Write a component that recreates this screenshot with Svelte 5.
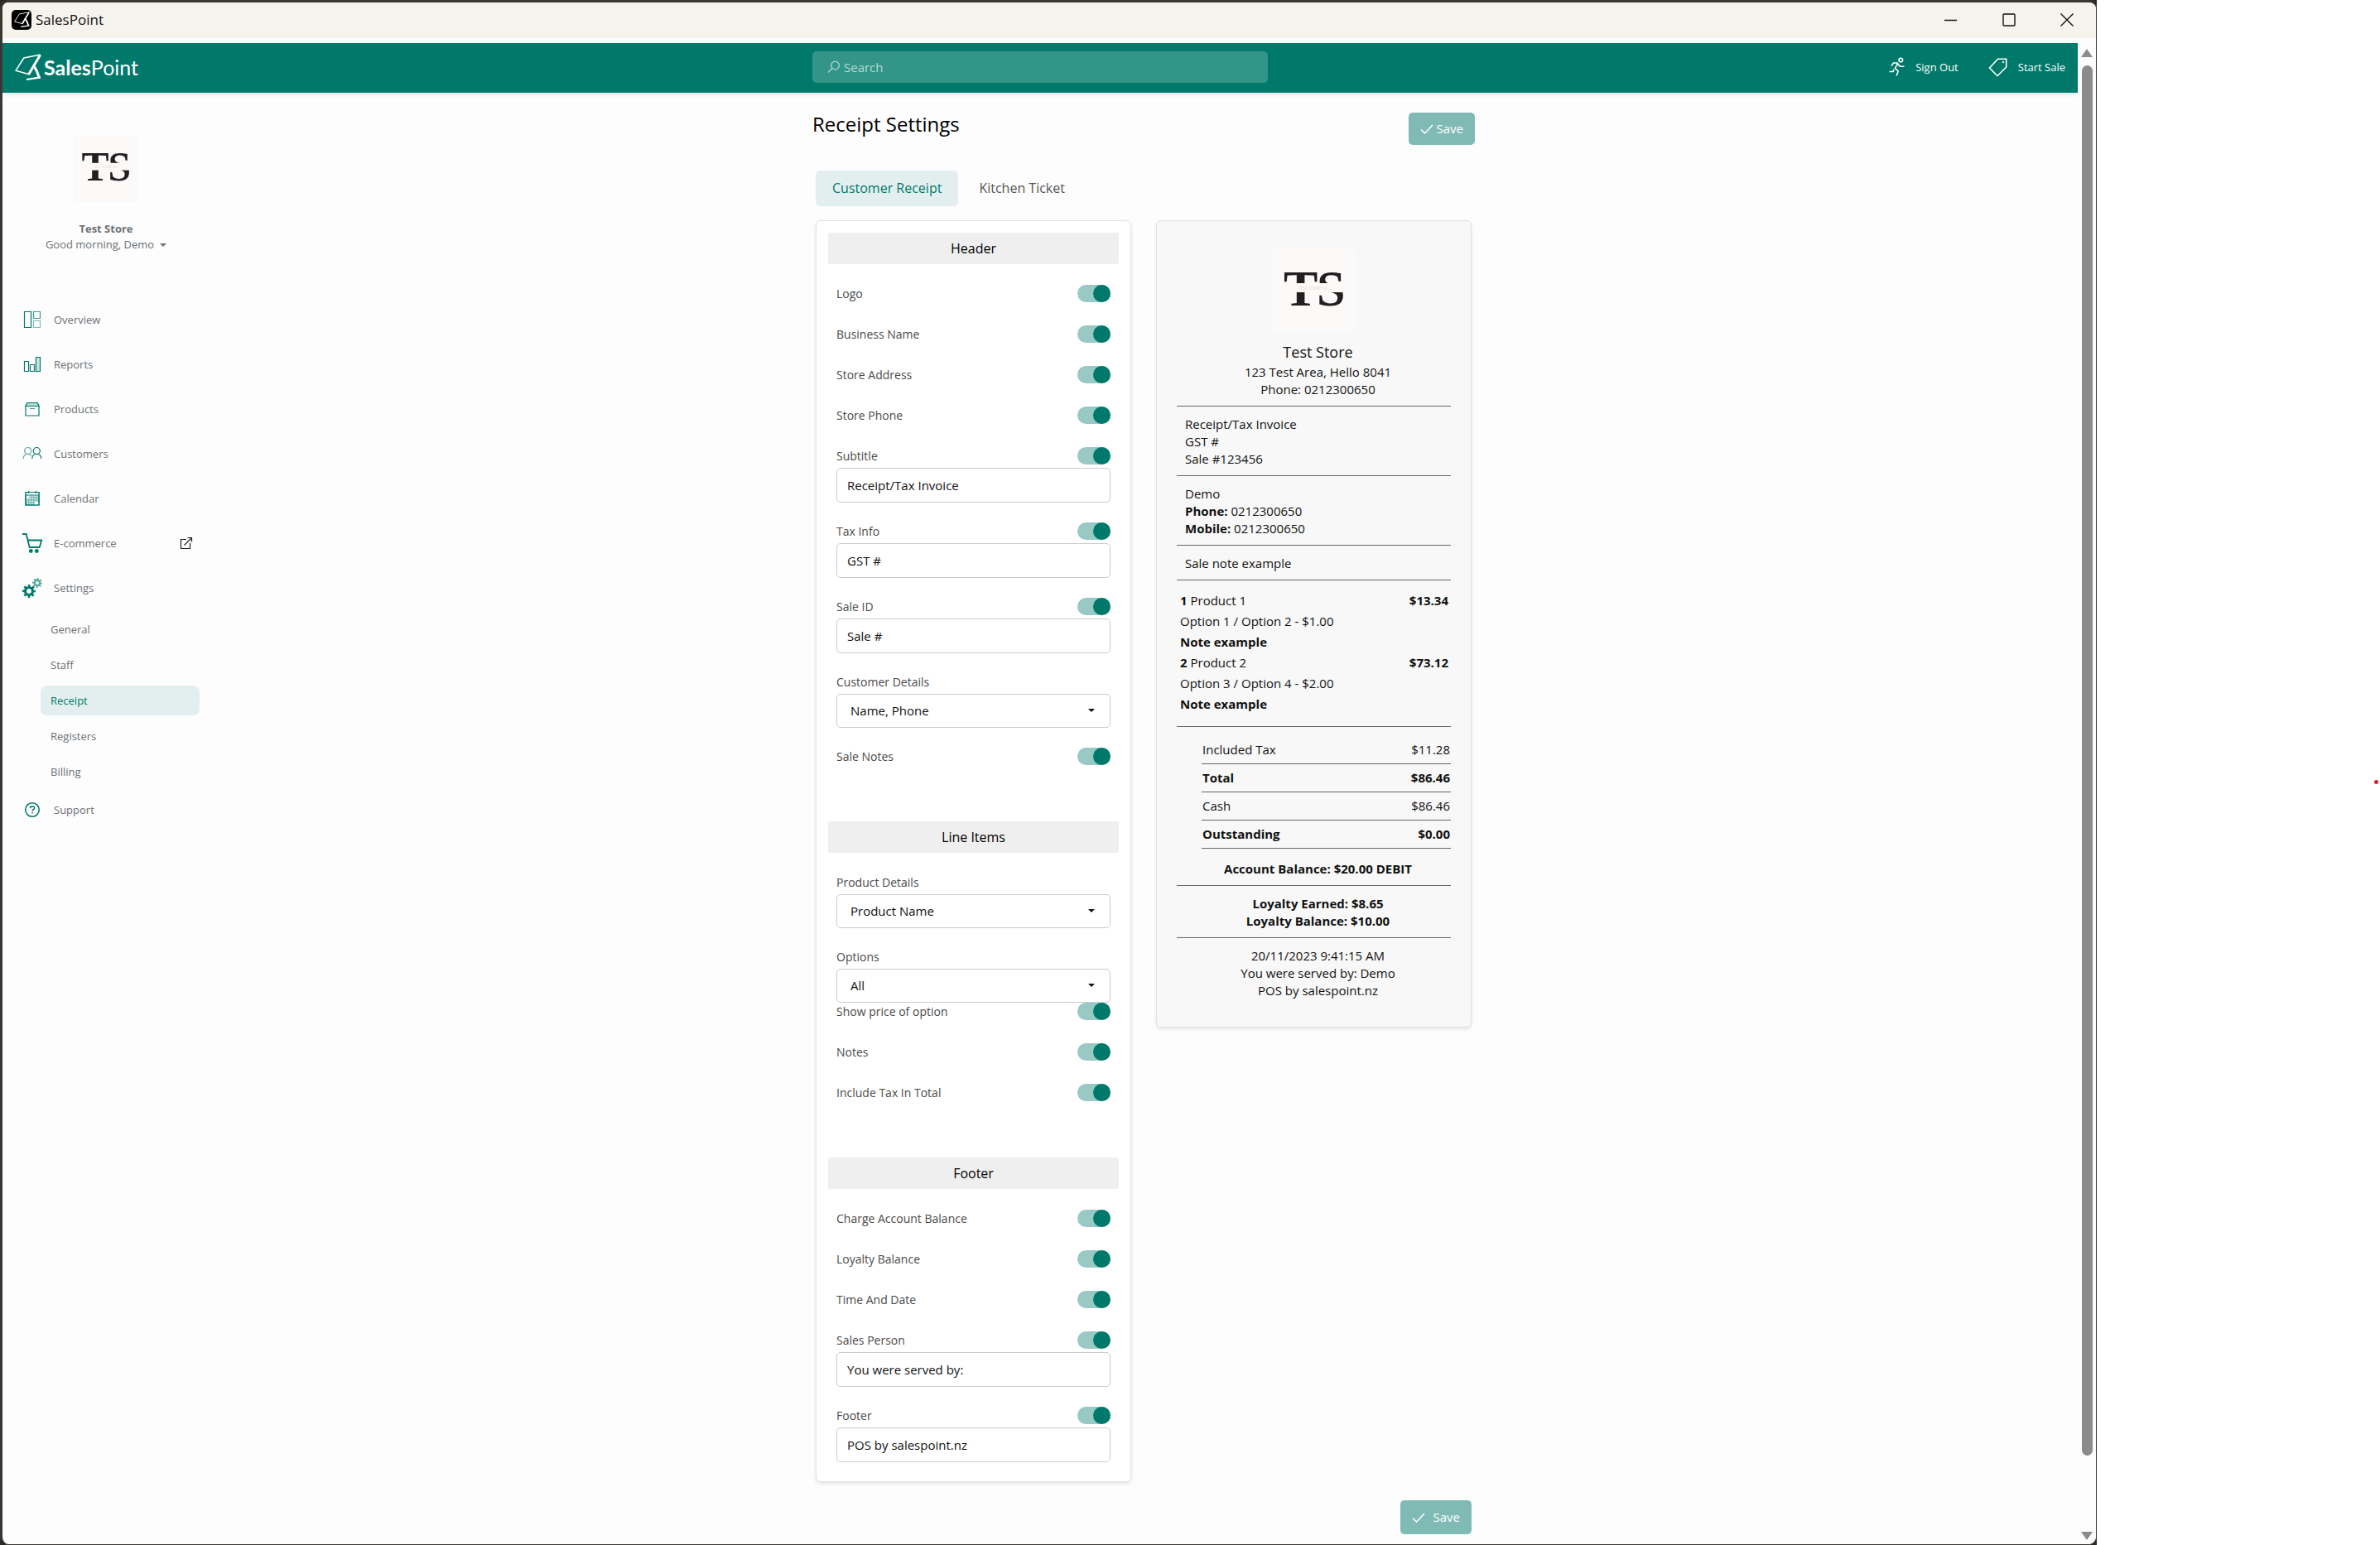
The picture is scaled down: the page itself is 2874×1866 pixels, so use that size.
<script>
  const icons = {
    overview: '<path d="M2.5 2.5h8v19h-8z"/><path opacity=".75" d="M13.5 2.5h8v8h-8z"/><path opacity=".5" d="M13.5 13.5h8v8h-8z"/>',
    reports: '<path d="M2.5 8.5h5v12h-5zM9.5 12.5h5v8h-5z"/><path fill="#cfe4e1" d="M16.5 3.5h5v17h-5z"/>',
    products: '<path d="M4 8.5v11.5h16V8.5"/><path fill="#b9d9d6" d="M3.8 8.5l2-4h12.4l2 4z"/><path opacity=".7" d="M9 11.5h6"/>',
    customers: '<g opacity=".65"><circle cx="6.7" cy="8.5" r="4"/><path d="M1.2 18c0-3.5 2-5.5 5.5-5.5 2 0 3.5.8 4.3 2"/></g><circle cx="17.3" cy="8.5" r="4"/><path d="M11.8 18c0-3.5 2-5.5 5.5-5.5s5.500 2 5.500 5.500"/>',
    calendar: '<path fill="#b9d9d6" d="M4 4.5h16v15.5H4z"/><path fill="#fff" d="M4 4.5h16v4H4zM4.5 9h3.5v2.5H4.5zM15 16h4.5v3.5H15z" stroke="none"/><path d="M4 4.5h16v15.5H4zM4 8h16M7.5 3v3M16.5 3v3"/><path stroke-dasharray="1.3 1.7" d="M10 11h8M7 14h11M7 17h8"/>',
    cart: '<path stroke-width="1.8" d="M0 1h4.7l4 16h12l2.6-8.5H6.5"/><circle cx="10.3" cy="21.5" r="2.4" fill="#00796b" stroke="none"/><circle cx="17.3" cy="21.5" r="2.4" fill="#00796b" stroke="none"/>',
    gears: '<circle cx="8" cy="16" r="4.5" stroke-width="3.2"/><circle cx="8" cy="16" r="6.7" stroke-width="2.6" stroke-dasharray="2.63 2.63" stroke-dashoffset="1.3"/><g opacity=".65"><circle cx="18" cy="6" r="3.2" stroke-width="2.4"/><circle cx="18" cy="6" r="5" stroke-width="2" stroke-dasharray="1.96 1.96" stroke-dashoffset="1"/></g>',
    help: '<circle cx="12" cy="12" r="8.3" stroke-width="1.5"/><path stroke-width="1.5" d="M9.5 10.2c0-1.6 1-2.5 2.5-2.5s2.5.9 2.5 2.2c0 1.7-2.4 1.8-2.4 3.8M12.1 15v1.6"/>'
  }

  const nav = [
    { name: 'Overview', icon: 'overview' },
    { name: 'Reports', icon: 'reports' },
    { name: 'Products', icon: 'products' },
    { name: 'Customers', icon: 'customers' },
    { name: 'Calendar', icon: 'calendar' },
    { name: 'E-commerce', icon: 'cart', external: true },
    { name: 'Settings', icon: 'gears', children: ['General', 'Staff', 'Receipt', 'Registers', 'Billing'] },
    { name: 'Support', icon: 'help' }
  ]

  let settings = $state([
    {
      title: 'Header',
      rows: [
        { label: 'Logo', on: true },
        { label: 'Business Name', on: true },
        { label: 'Store Address', on: true },
        { label: 'Store Phone', on: true },
        { label: 'Subtitle', on: true, text: 'Receipt/Tax Invoice' },
        { label: 'Tax Info', on: true, text: 'GST #' },
        { label: 'Sale ID', on: true, text: 'Sale #' },
        { label: 'Customer Details', options: ['Name, Phone', 'Name'] },
        { label: 'Sale Notes', on: true }
      ]
    },
    {
      title: 'Line Items',
      rows: [
        { label: 'Product Details', options: ['Product Name', 'SKU'] },
        { label: 'Options', options: ['All', 'None'], tight: true },
        { label: 'Show price of option', on: true },
        { label: 'Notes', on: true },
        { label: 'Include Tax In Total', on: true }
      ]
    },
    {
      title: 'Footer',
      rows: [
        { label: 'Charge Account Balance', on: true },
        { label: 'Loyalty Balance', on: true },
        { label: 'Time And Date', on: true },
        { label: 'Sales Person', on: true, text: 'You were served by:' },
        { label: 'Footer', on: true, text: 'POS by salespoint.nz' }
      ]
    }
  ])

  const items = [
    { qty: 1, name: 'Product 1', price: '$13.34', options: 'Option 1 / Option 2 - $1.00' },
    { qty: 2, name: 'Product 2', price: '$73.12', options: 'Option 3 / Option 4 - $2.00' }
  ]

  const totals = [
    { name: 'Included Tax', value: '$11.28' },
    { name: 'Total', value: '$86.46', strong: true },
    { name: 'Cash', value: '$86.46' },
    { name: 'Outstanding', value: '$0.00', strong: true }
  ]
</script>

{#snippet mark(size)}
  <svg width={size} height={size} viewBox="0 0 32 32" fill="none" stroke="#fff" aria-hidden="true">
    <path stroke-width="1.5" d="M18 25L1 20.3 10.8 5 31 1" />
    <path stroke-width="3" d="M30.5 1.5L16.8 24.5" />
    <path stroke-width="3" d="M22.5 14L26.5 21 29.5 29.5" />
    <path stroke-width="2.2" d="M14 31L31 28.3" />
  </svg>
{/snippet}

{#snippet storeLogo(size)}
  <svg class="store-logo" width={size} height={size} viewBox="0 0 100 100" role="img" aria-label="Test Store logo">
    <rect width="100" height="100" fill="#fbfaf8" />
    <g font-family="Liberation Serif, serif" font-weight="700" font-size="62" fill="#231f20">
      <text x="13" y="68">T</text>
      <text x="53" y="68">S</text>
    </g>
    <rect x="10" y="41" width="80" height="11" fill="#fbfaf8" />
    <text x="49" y="49" text-anchor="middle" font-family="Open Sans, sans-serif" font-size="5" fill="#ecd9da">TEST STORE NZ</text>
  </svg>
{/snippet}

{#snippet check()}
  <svg width="16" height="16" viewBox="0 0 16 16" fill="none" stroke="#fff" stroke-width="1.5" aria-hidden="true">
    <path d="M1 8.5L5.5 13 15 3" />
  </svg>
{/snippet}

<div class="desktop">
  <div class="window">
    <div class="titlebar">
      <span class="app-icon">{@render mark(19)}</span>
      <span class="app-name">SalesPoint</span>
      <div class="controls">
        <button aria-label="Minimize"><svg width="16" height="16"><path d="M0 8.5h15" /></svg></button>
        <button aria-label="Maximize"><svg width="16" height="16"><rect x="1" y="1" width="14" height="14" rx="1" /></svg></button>
        <button aria-label="Close"><svg width="16" height="16"><path d="M.5.5l15 15M15.5.5l-15 15" /></svg></button>
      </div>
    </div>

    <div class="view">
      <div class="page">
        <header>
          <a class="brand" href="#home">{@render mark(32)}<span><b>Sales</b>Point</span></a>
          <label class="search">
            <svg width="16" height="16" viewBox="0 0 16 16" fill="none" stroke="#b5d9d5" stroke-width="1.3" aria-hidden="true">
              <circle cx="9.5" cy="6" r="4.8" /><path d="M6 9.5L1 14.5" />
            </svg>
            <input type="search" placeholder="Search" aria-label="Search" />
          </label>
          <div class="actions">
            <a href="#signout">
              <svg width="20" height="24" viewBox="0 0 20 24" fill="none" stroke="#fff" stroke-width="1.6" aria-hidden="true">
                <circle cx="14.3" cy="3.5" r="2.3" />
                <path d="M3 10.5L5.5 7H10l3.300 4.300H18.500M10.500 7.500L7.500 13.500l3.700 3.500-2 5.500M6.200 14.800L5 17.500H.5" />
              </svg>
              Sign Out
            </a>
            <a href="#sale">
              <svg width="24" height="24" viewBox="0 0 24 24" fill="none" stroke="#fff" stroke-width="1.6" aria-hidden="true">
                <path d="M1.5 13L11.5 2.3h10.2V12L11 22.7z" /><circle cx="18" cy="6" r=".4" />
              </svg>
              Start Sale
            </a>
          </div>
        </header>

        <div class="body">
          <aside>
            <div class="store">
              {@render storeLogo(80)}
              <strong>Test Store</strong>
              <button class="greeting">Good morning, Demo <i class="caret"></i></button>
            </div>
            <nav>
              {#each nav as item}
                <a class="nav-item" href="#{item.icon}">
                  <svg width="24" height="24" viewBox="0 0 24 24" fill="none" stroke="#00796b" stroke-width="1.2" aria-hidden="true">{@html icons[item.icon]}</svg>
                  {item.name}
                  {#if item.external}
                    <svg class="external" width="16" height="16" viewBox="0 0 16 16" fill="none" stroke="#222" stroke-width="1.2" aria-hidden="true">
                      <path d="M8 3.5H1.5v11h11V8M5.5 10.5l9-9M9.500 1.500h5v5" />
                    </svg>
                  {/if}
                </a>
                {#if item.children}
                  <div class="sub">
                    {#each item.children as child}
                      <a href="#{child}" class:active={child === 'Receipt'}>{child}</a>
                    {/each}
                  </div>
                {/if}
              {/each}
            </nav>
          </aside>

          <main>
            <div class="heading">
              <h1>Receipt Settings</h1>
              <button class="save">{@render check()}Save</button>
            </div>

            <div class="content">
              <div class="tabs">
                <button class="active">Customer Receipt</button>
                <button>Kitchen Ticket</button>
              </div>

              <div class="columns">
                <form class="card">
                  {#each settings as section, s}
                    <section>
                      <h2>{section.title}</h2>
                      {#each section.rows as row, r}
                        <div class="row" class:with-field={row.text || row.options} class:tight={row.tight}>
                          <div class="line">
                            <label for="field-{s}-{r}">{row.label}</label>
                            {#if !row.options}
                              <input id="field-{s}-{r}" class="toggle" type="checkbox" bind:checked={row.on} />
                            {/if}
                          </div>
                          {#if row.text}
                            <input class="text" type="text" aria-label="{row.label} text" bind:value={row.text} />
                          {:else if row.options}
                            <div class="select">
                              <select id="field-{s}-{r}">
                                {#each row.options as option}
                                  <option>{option}</option>
                                {/each}
                              </select>
                            </div>
                          {/if}
                        </div>
                      {/each}
                    </section>
                  {/each}
                </form>

                <div class="card receipt">
                  {@render storeLogo(100)}
                  <div class="block center first">
                    <p class="store-name">Test Store</p>
                    <p>123 Test Area, Hello 8041</p>
                    <p>Phone: 0212300650</p>
                  </div>
                  <div class="block">
                    <p>Receipt/Tax Invoice</p>
                    <p>GST #</p>
                    <p>Sale #123456</p>
                  </div>
                  <div class="block">
                    <p>Demo</p>
                    <p><b>Phone:</b> 0212300650</p>
                    <p><b>Mobile:</b> 0212300650</p>
                  </div>
                  <div class="block">
                    <p>Sale note example</p>
                  </div>
                  <div class="items">
                    {#each items as item}
                      <p><span><b>{item.qty}</b> {item.name}</span><b>{item.price}</b></p>
                      <p>{item.options}</p>
                      <p><b>Note example</b></p>
                    {/each}
                  </div>
                  <table>
                    <tbody>
                      {#each totals as total}
                        <tr class:strong={total.strong}>
                          <td>{total.name}</td>
                          <td>{total.value}</td>
                        </tr>
                      {/each}
                    </tbody>
                  </table>
                  <div class="block center strong first balance">
                    <p>Account Balance: $20.00 DEBIT</p>
                  </div>
                  <div class="block center strong">
                    <p>Loyalty Earned: $8.65</p>
                    <p>Loyalty Balance: $10.00</p>
                  </div>
                  <div class="block center">
                    <p>20/11/2023 9:41:15 AM</p>
                    <p>You were served by: Demo</p>
                    <p>POS by salespoint.nz</p>
                  </div>
                </div>
              </div>

              <div class="bottom">
                <button class="save wide">{@render check()}Save</button>
              </div>
            </div>
          </main>
        </div>
      </div>

      <div class="scrollbar">
        <svg width="14" height="10"><path d="M7 0l7 10H0z" /></svg>
        <div class="thumb"></div>
        <svg width="14" height="10"><path d="M0 0h14L7 10z" /></svg>
      </div>
    </div>
  </div>
  <span class="dot"></span>
</div>

<style>
  :global(body) {
    background: #fff;
  }

  .desktop {
    --green: #00796b;
    position: relative;
    padding-right: 342px;
    font-family: "Open Sans", "Noto Sans", sans-serif;
    font-size: 15px;
    line-height: 21px;
    color: #111;
    background: linear-gradient(to left, #fff 342px, #2d2a26 342px);
  }

  .desktop * {
    box-sizing: border-box;
  }

  button, input, select {
    font: inherit;
    color: inherit;
    border: 0;
    background: none;
    padding: 0;
    margin: 0;
  }

  a {
    color: inherit;
    text-decoration: none;
  }

  p, h1, h2 {
    margin: 0;
  }

  .window {
    display: flex;
    flex-direction: column;
    min-height: 100vh;
    border: 1px solid #3a3733;
    border-width: 3px 1px 1px 3px;
    border-radius: 10px;
    overflow: hidden;
    background: #fdfdfd;
  }

  .titlebar {
    display: flex;
    align-items: center;
    gap: 5px;
    height: 43px;
    padding: 0 27px 2px 11px;
    background: #f5f3ec;
  }

  .app-icon {
    display: grid;
    place-content: center;
    width: 24px;
    height: 24px;
    border-radius: 5px;
    background: #000;
  }

  .app-name {
    font-size: 17px;
  }

  .controls {
    display: flex;
    gap: 54px;
    margin-left: auto;
  }

  .controls button {
    display: flex;
  }

  .controls svg {
    fill: none;
    stroke: #111;
    stroke-width: 1.4;
  }

  .view {
    display: flex;
    flex: 1;
    padding-top: 6px;
  }

  .page {
    flex: 1;
  }

  header {
    display: grid;
    grid-template-columns: 250px 1fr 800px 1fr;
    align-items: center;
    height: 60px;
    padding-bottom: 2px;
    color: #fff;
    background: var(--green);
    box-shadow: 0 2px 5px #00796b26;
  }

  .brand {
    display: flex;
    align-items: center;
    gap: 3px;
    padding-left: 15px;
    font-family: Lato, sans-serif;
    font-size: 25px;
  }

  .search {
    display: flex;
    grid-column: 3;
    align-items: center;
    gap: 4px;
    width: 550px;
    height: 38px;
    padding-left: 18px;
    border-radius: 5px;
    background: #339488;
  }

  .search input {
    flex: 1;
    outline: 0;
  }

  .search input::placeholder {
    color: #b5d9d5;
  }

  .actions {
    display: flex;
    justify-content: flex-end;
    gap: 36px;
    padding-right: 15px;
    font-size: 13px;
  }

  .actions a {
    display: flex;
    align-items: center;
    gap: 12px;
  }

  .body {
    display: grid;
    grid-template-columns: 250px 1fr;
  }

  .store {
    display: flex;
    flex-direction: column;
    align-items: center;
    padding-top: 52px;
    margin-bottom: 54px;
    font-size: 13px;
    line-height: 19px;
    color: #6c7075;
  }

  .store strong {
    margin-top: 23px;
  }

  .greeting {
    display: flex;
    align-items: center;
    gap: 7px;
    font-weight: 500;
  }

  .caret {
    border: 4px solid transparent;
    border-top-color: currentColor;
    border-bottom: 0;
  }

  nav {
    font-size: 13px;
    font-weight: 500;
    color: #6c7075;
  }

  .nav-item {
    display: flex;
    align-items: center;
    gap: 14px;
    height: 54px;
    padding: 0 20px 0 24px;
  }

  .external {
    margin-left: auto;
  }

  .sub {
    display: flex;
    flex-direction: column;
    gap: 7px;
    padding: 5px 12px 1px 46px;
  }

  .sub a {
    padding: 0 12px;
    line-height: 36px;
    border-radius: 8px;
  }

  .sub a.active {
    color: var(--green);
    background: #e3efee;
  }

  main {
    width: 800px;
    margin: 0 auto;
    padding: 24px 0 11px;
  }

  .heading {
    display: flex;
    justify-content: space-between;
  }

  h1 {
    font-size: 24px;
    font-weight: 500;
    line-height: 28px;
    color: #000;
  }

  .save {
    display: flex;
    align-items: center;
    gap: 4px;
    height: 39px;
    padding: 0 14px;
    color: #fff;
    border-radius: 5px;
    background: #7fbbb4;
  }

  .save.wide {
    gap: 10px;
    height: 41px;
  }

  .content {
    padding: 31px 4px 0;
  }

  .tabs {
    display: flex;
    gap: 5px;
    margin-bottom: 17px;
  }

  .tabs button {
    height: 43px;
    padding: 0 20px;
    font-size: 16px;
    color: #555;
    border-radius: 5px;
  }

  .tabs .active {
    color: var(--green);
    background: #e3efee;
  }

  .columns {
    display: grid;
    grid-template-columns: 1fr 1fr;
    gap: 30px;
    align-items: start;
  }

  .card {
    padding: 14px 14px 22px;
    border: 1px solid #e2e2e2;
    border-radius: 6px;
    background: #fff;
    box-shadow: 0 2px 4px #0000001a;
  }

  h2 {
    margin-bottom: 25px;
    font-size: 16px;
    font-weight: 400;
    line-height: 38px;
    text-align: center;
    color: #000;
    border-radius: 2px;
    background: #efefef;
  }

  section + section {
    margin-top: 68px;
  }

  .row {
    padding: 0 10px;
    margin-bottom: 28px;
  }

  .row.with-field {
    margin-bottom: 24px;
  }

  .row.tight,
  .row:last-child {
    margin-bottom: 0;
  }

  .card section:last-child .row:last-child {
    margin-bottom: 1px;
  }

  .line {
    display: flex;
    justify-content: space-between;
    height: 21px;
    font-size: 14px;
    color: #4a4a4a;
  }

  .toggle {
    width: 40px;
    height: 21px;
    appearance: none;
    border-radius: 11px;
    background: #99c9c4;
  }

  .toggle::before {
    content: "";
    display: block;
    width: 21px;
    height: 21px;
    border-radius: 50%;
    background: #777;
  }

  .toggle:checked::before {
    margin-left: auto;
    background: var(--green);
  }

  .text,
  select {
    display: block;
    width: 100%;
    height: 42px;
    margin-top: 4px;
    padding: 0 12px;
    border: 1px solid #ccc;
    border-radius: 5px;
    background: #fff;
  }

  .select {
    position: relative;
  }

  select {
    height: 41px;
    padding: 0 16px;
    appearance: none;
  }

  .select::after {
    content: "";
    position: absolute;
    right: 19px;
    top: 18px;
    border: 4px solid transparent;
    border-top-color: #111;
    border-bottom: 0;
  }

  .card.receipt {
    padding: 34px 24px 24px;
    background: #f8f8f8;
  }

  .receipt .store-logo {
    display: block;
    margin: 0 auto;
  }

  .block {
    padding: 11px 0 9px 10px;
    border-top: 1px solid #666;
  }

  .block.first {
    border-top: 0;
  }

  .center {
    text-align: center;
  }

  .strong {
    font-weight: 700;
  }

  .block.balance {
    padding-top: 14px;
  }

  .store-name {
    font-size: 18px;
    line-height: 27px;
  }

  .items {
    padding: 12px 3px 14px 4px;
    line-height: 25px;
    border-top: 1px solid #666;
    border-bottom: 1px solid #666;
  }

  .items p {
    display: flex;
    justify-content: space-between;
  }

  table {
    width: calc(100% - 30px);
    margin: 10px 0 0 30px;
    border-collapse: collapse;
  }

  td {
    height: 34px;
    padding: 1px 1px 0;
    border-bottom: 1px solid #666;
  }

  td:last-child {
    text-align: right;
  }

  .bottom {
    display: flex;
    justify-content: flex-end;
    margin-top: 22px;
  }

  .scrollbar {
    display: flex;
    flex-direction: column;
    align-items: center;
    gap: 10px;
    width: 22px;
    padding: 7px 0 5px;
    fill: #8b8b8b;
    background: #fcfcfc;
  }

  .thumb {
    flex: 1;
    width: 13px;
    margin-bottom: 82px;
    border-radius: 7px;
    background: #8b8b8b;
  }

  .dot {
    position: absolute;
    right: 2px;
    top: 942px;
    width: 5px;
    height: 5px;
    border-radius: 50%;
    background: #e0202a;
  }
</style>
